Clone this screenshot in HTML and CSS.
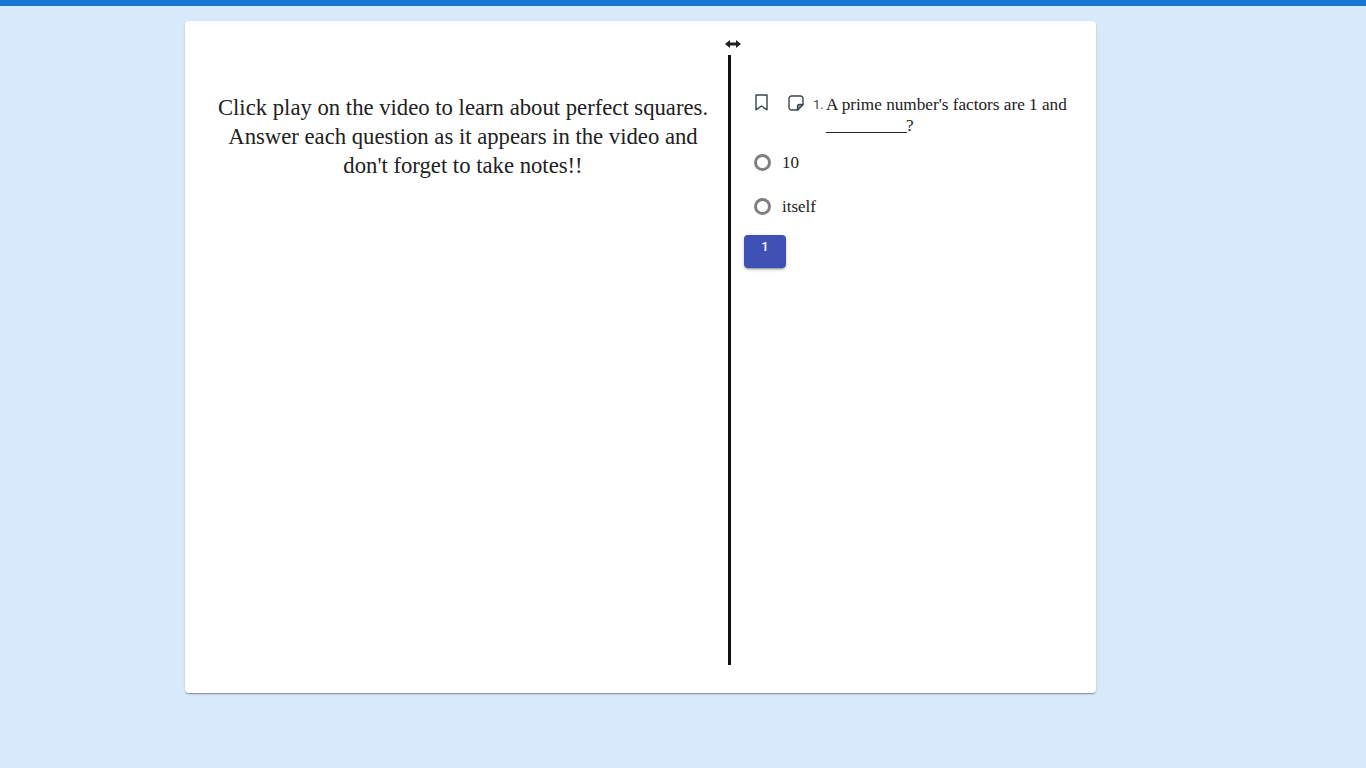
FILE: index.html
```html
<!DOCTYPE html>
<html lang="en">
<head>
  <meta charset="UTF-8">
  <meta name="viewport" content="width=device-width, initial-scale=1.0">
  <title>Perfect Squares</title>
  <link rel="stylesheet" href="styles.css">
</head>
<body>
  <div class="top-bar"></div>

  <main class="card">
    <section class="intro">
      <p>Click play on the video to learn about perfect squares. Answer each question as it appears in the video and don't forget to take notes!!</p>
    </section>

    <div class="splitter">
      <svg class="drag-icon" width="16" height="10" viewBox="0 0 16 10">
        <path d="M0 5 L5 1 V3.5 H11 V1 L16 5 L11 9 V6.5 H5 V9 Z" fill="#212121"/>
      </svg>
      <div class="divider"></div>
    </div>

    <section class="quiz">
      <div class="question">
        <svg class="icon-bookmark" width="13" height="17" viewBox="0 0 13 17">
          <path d="M1 1 H12 V15.8 L6.5 12 L1 15.8 Z" fill="none" stroke="#37474f" stroke-width="1.4" stroke-linejoin="round"/>
        </svg>
        <svg class="icon-note" width="16" height="16" viewBox="0 0 16 16">
          <path d="M3.5 1 H12.5 A2.5 2.5 0 0 1 15 3.5 V9.5 L9.5 15 H3.5 A2.5 2.5 0 0 1 1 12.5 V3.5 A2.5 2.5 0 0 1 3.5 1 Z" fill="none" stroke="#37474f" stroke-width="1.4" stroke-linejoin="round"/>
          <path d="M15 9.5 H11.5 A2 2 0 0 0 9.5 11.5 V15 Z" fill="#90a4ae" stroke="#37474f" stroke-width="1.4" stroke-linejoin="round"/>
        </svg>
        <span class="number">1.</span>
        <p class="question-text">A prime number's factors are 1 and <span class="blank">__________</span>?</p>
      </div>

      <label class="option"><span class="radio"></span>10</label>
      <label class="option"><span class="radio"></span>itself</label>

      <button class="page-btn">1</button>
    </section>
  </main>
</body>
</html>
```

FILE: styles.css
```css
body {
  margin: 0;
  height: 768px;
  overflow: hidden;
  background-color: #d7e9fa;
  font-family: "Liberation Serif", "DejaVu Serif", serif;
  color: #212121;
}
.top-bar {
  height: 6px;
  background-color: #1976d2;
}
.card {
  display: flex;
  box-sizing: border-box;
  width: 911px;
  height: 672px;
  margin: 15px 0 0 185px;
  background-color: #fff;
  border-radius: 4px;
  box-shadow: 0 2px 1px -1px rgba(0, 0, 0, 0.2), 0 1px 1px 0 rgba(0, 0, 0, 0.14), 0 1px 3px 0 rgba(0, 0, 0, 0.12);
}
.intro {
  box-sizing: border-box;
  width: 543px;
  padding: 72px 15px 0 28px;
  text-align: center;
}
.intro p {
  margin: 0;
  font-size: 22.7px;
  line-height: 29px;
}
.splitter {
  display: flex;
  flex-direction: column;
  width: 16px;
  padding-top: 18px;
  box-sizing: border-box;
}
.drag-icon {
  flex: none;
  margin-left: -3px;
}
.divider {
  width: 3px;
  height: 610px;
  margin-top: 6px;
  background-color: #111;
}
.quiz {
  flex: 1;
  padding-top: 73px;
}
.question {
  display: flex;
  align-items: flex-start;
  font-size: 17.2px;
  line-height: 21px;
}
.icon-bookmark {
  margin-left: 11px;
}
.icon-note {
  margin: 1px 0 0 20px;
}
.number {
  flex: none;
  width: 13px;
  margin-left: 9px;
  font-family: "Roboto", sans-serif;
  font-size: 13px;
  color: #444;
}
.question-text {
  margin: 0;
  width: 250px;
}
.blank {
  letter-spacing: -0.6px;
}
.option {
  display: flex;
  align-items: center;
  gap: 11px;
  height: 20px;
  margin: 0 0 24px 10px;
  font-size: 17px;
}
.question + .option {
  margin-top: 17px;
}
.radio {
  box-sizing: border-box;
  width: 17px;
  height: 17px;
  margin-top: -1px;
  border: 3px solid #7f7f7f;
  border-radius: 50%;
}
.page-btn {
  display: block;
  width: 42px;
  height: 33px;
  margin: -6px 0 0;
  padding: 0 0 10px;
  border: none;
  border-radius: 4px;
  background-color: #3f51b5;
  color: #fff;
  font-family: "Roboto", sans-serif;
  font-size: 13px;
  font-weight: 500;
  box-shadow: 0 3px 1px -2px rgba(0, 0, 0, 0.2), 0 2px 2px 0 rgba(0, 0, 0, 0.14), 0 1px 5px 0 rgba(0, 0, 0, 0.12);
}
```
